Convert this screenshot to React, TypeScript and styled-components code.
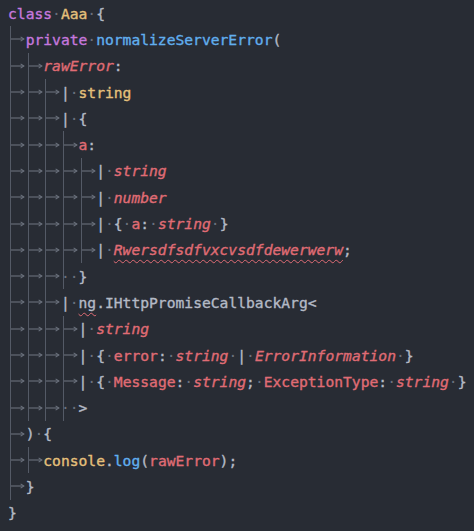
import React from "react";
import styled, { createGlobalStyle, css } from "styled-components";

const GlobalStyle = createGlobalStyle`
  html, body {
    margin: 0;
    padding: 0;
    background: #282c34;
  }
  body {
    width: 474px;
    height: 531px;
    overflow: hidden;
  }
`;

type Kind =
  | "kw"
  | "cls"
  | "fn"
  | "p"
  | "param"
  | "prop"
  | "type"
  | "ytype"
  | "plain";

type Tok = { k: Kind; t: string; squiggle?: boolean };

type LineSpec = { tabs: number; spaces?: number; toks: Tok[] };

const colors: Record<Kind, string> = {
  kw: "#c678dd",
  cls: "#e5c07b",
  fn: "#61afef",
  p: "#b4bac6",
  param: "#e06c75",
  prop: "#e06c75",
  type: "#e06c75",
  ytype: "#e5c07b",
  plain: "#b4bac6",
};

const italicKinds: Kind[] = ["param", "type"];

const Editor = styled.div`
  box-sizing: border-box;
  width: 474px;
  height: 531px;
  padding: 0 0 0 8px;
  background: #282c34;
  font-family: "DejaVu Sans Mono", "Liberation Mono", monospace;
  font-size: 14.65px;
  color: #b4bac6;
  display: flex;
  flex-direction: column;
`;

const Line = styled.div`
  display: flex;
  align-items: center;
  height: 26.3px;
  white-space: pre;
`;

const IndentCell = styled.span<{ $width: number }>`
  align-self: stretch;
  display: flex;
  align-items: center;
  width: ${(p) => p.$width}ch;
  flex: none;
  background: linear-gradient(#545a66, #545a66) 2px 0 / 1px 100% no-repeat;
`;

const Arrow = styled.svg`
  display: block;
  width: 100%;
  height: 8px;
  overflow: visible;
`;

const Token = styled.span<{ $kind: Kind; $squiggle?: boolean }>`
  color: ${(p) => colors[p.$kind]};
  font-style: ${(p) => (italicKinds.includes(p.$kind) ? "italic" : "normal")};
  -webkit-text-stroke: 0.35px currentColor;
  ${(p) =>
    p.$squiggle &&
    css`
      text-decoration: underline wavy #e06c75;
      text-decoration-thickness: 1.4px;
      text-underline-offset: 4px;
    `}
`;

const Dot = styled.span`
  color: #6b717d;
  -webkit-text-stroke: 0;
  font-style: normal;
`;

const TabArrow: React.FC = () => (
  <Arrow viewBox="0 0 17.6 8" preserveAspectRatio="none">
    <line x1="3" y1="4" x2="15.5" y2="4" stroke="#6b717d" strokeWidth="1.1" />
    <path d="M12.6 1.9 L15.8 4 L12.6 6.1" fill="none" stroke="#6b717d" strokeWidth="1.1" />
  </Arrow>
);

const renderText = (text: string) => {
  const parts = text.split(" ");
  const out: React.ReactNode[] = [];
  parts.forEach((part, i) => {
    if (i > 0) out.push(<Dot key={`d${i}`}>·</Dot>);
    if (part) out.push(<React.Fragment key={`t${i}`}>{part}</React.Fragment>);
  });
  return out;
};

const T = (k: Kind, t: string, squiggle?: boolean): Tok => ({ k, t, squiggle });

const lines: LineSpec[] = [
  { tabs: 0, toks: [T("kw", "class"), T("p", " "), T("cls", "Aaa"), T("p", " {")] },
  { tabs: 1, toks: [T("kw", "private"), T("p", " "), T("fn", "normalizeServerError"), T("p", "(")] },
  { tabs: 2, toks: [T("param", "rawError"), T("p", ":")] },
  { tabs: 3, toks: [T("p", "| "), T("ytype", "string")] },
  { tabs: 3, toks: [T("p", "| {")] },
  { tabs: 4, toks: [T("prop", "a"), T("p", ":")] },
  { tabs: 5, toks: [T("p", "| "), T("type", "string")] },
  { tabs: 5, toks: [T("p", "| "), T("type", "number")] },
  {
    tabs: 5,
    toks: [T("p", "| { "), T("prop", "a"), T("p", ": "), T("type", "string"), T("p", " }")],
  },
  {
    tabs: 5,
    toks: [T("p", "| "), T("type", "Rwersdfsdfvxcvsdfdewerwerw", true), T("p", ";")],
  },
  { tabs: 3, spaces: 2, toks: [T("p", "}")] },
  {
    tabs: 3,
    toks: [T("p", "| "), T("plain", "ng", true), T("plain", ".IHttpPromiseCallbackArg<")],
  },
  { tabs: 4, toks: [T("p", "| "), T("type", "string")] },
  {
    tabs: 4,
    toks: [
      T("p", "| { "),
      T("prop", "error"),
      T("p", ": "),
      T("type", "string"),
      T("p", " | "),
      T("type", "ErrorInformation"),
      T("p", " }"),
    ],
  },
  {
    tabs: 4,
    toks: [
      T("p", "| { "),
      T("prop", "Message"),
      T("p", ": "),
      T("type", "string"),
      T("p", "; "),
      T("prop", "ExceptionType"),
      T("p", ": "),
      T("type", "string"),
      T("p", " }"),
    ],
  },
  { tabs: 3, spaces: 2, toks: [T("p", ">")] },
  { tabs: 1, toks: [T("p", ") {")] },
  {
    tabs: 2,
    toks: [
      T("cls", "console"),
      T("p", "."),
      T("fn", "log"),
      T("p", "("),
      T("prop", "rawError"),
      T("p", ");"),
    ],
  },
  { tabs: 1, toks: [T("p", "}")] },
  { tabs: 0, toks: [T("p", "}")] },
];

const CodeLine: React.FC<{ spec: LineSpec }> = ({ spec }) => (
  <Line>
    {Array.from({ length: spec.tabs }).map((_, i) => (
      <IndentCell key={i} $width={2}>
        <TabArrow />
      </IndentCell>
    ))}
    {spec.spaces ? (
      <IndentCell $width={spec.spaces}>
        <Dot>{"·".repeat(spec.spaces)}</Dot>
      </IndentCell>
    ) : null}
    {spec.toks.map((tok, i) => (
      <Token key={i} $kind={tok.k} $squiggle={tok.squiggle}>
        {renderText(tok.t)}
      </Token>
    ))}
  </Line>
);

export default function App() {
  return (
    <>
      <GlobalStyle />
      <Editor>
        {lines.map((l, i) => (
          <CodeLine key={i} spec={l} />
        ))}
      </Editor>
    </>
  );
}
